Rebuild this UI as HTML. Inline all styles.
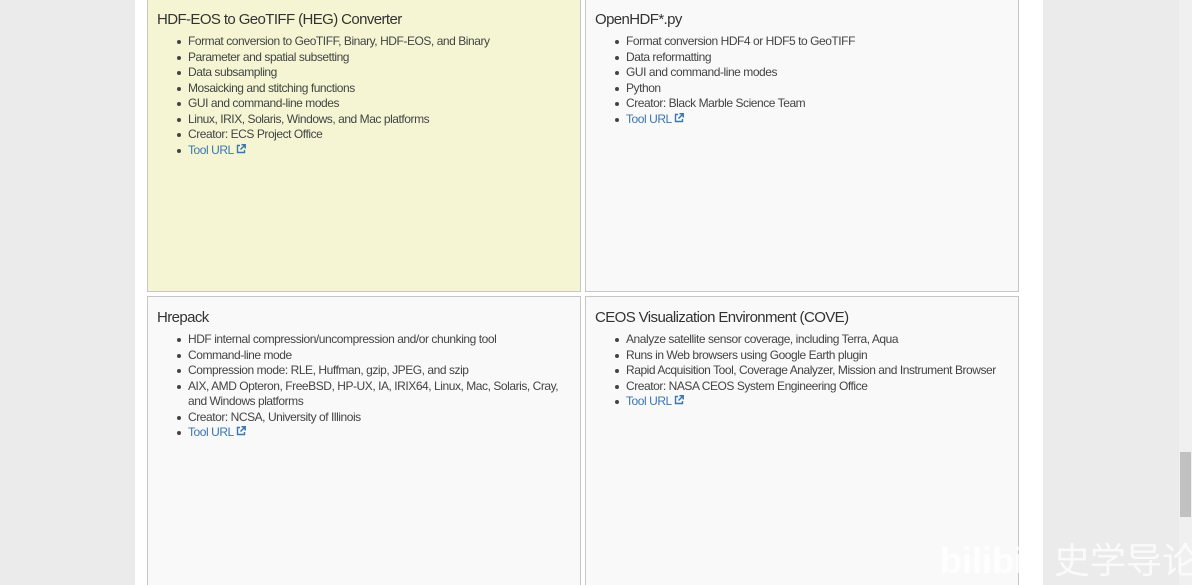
<!DOCTYPE html>
<html><head><meta charset="utf-8"><style>
*{box-sizing:border-box;margin:0;padding:0}
html,body{width:1192px;height:585px;overflow:hidden;background:#ebebeb;font-family:"Liberation Sans","Noto Sans CJK SC",sans-serif;color:#333;position:relative}
.wrap{position:absolute;left:135px;top:0;width:908px;height:585px;background:#fff}
.card{position:absolute;width:434px;border:1px solid #c6c6c6;background:#f9f9f9;padding:11px 9px 0}
.card.y{background:#f5f5d4}
h3{font-weight:normal;font-size:15px;letter-spacing:-0.6px;color:#333;line-height:20px;margin-bottom:4px}
ul{list-style:none;padding-left:31px}
li{font-size:12px;letter-spacing:-0.45px;line-height:15.5px;position:relative;color:#444}
li:before{content:"";position:absolute;left:-11px;top:6px;width:4px;height:4px;border-radius:2px;background:#444}
a{color:#3a76b0;text-decoration:none}
.sb{position:absolute;left:1179px;top:0;width:13px;height:585px;background:#f0f0f0}
.th{position:absolute;left:1180px;top:452px;width:11px;height:65px;background:#c1c1c1}
.wm{position:absolute;left:940px;top:538px;font-size:36px;color:rgba(255,255,255,.75);white-space:nowrap;line-height:45px}
</style></head><body>
<div class="wrap"></div>
<div class="card y" style="left:147px;top:-2px;height:294px">
<h3>HDF-EOS to GeoTIFF (HEG) Converter</h3>
<ul><li>Format conversion to GeoTIFF, Binary, HDF-EOS, and Binary</li><li>Parameter and spatial subsetting</li><li>Data subsampling</li><li>Mosaicking and stitching functions</li><li>GUI and command-line modes</li><li>Linux, IRIX, Solaris, Windows, and Mac platforms</li><li>Creator: ECS Project Office</li><li><a>Tool URL <svg width="10" height="10" viewBox="0 0 10 10"><path d="M4 1.5H1.5v7h7V6" fill="none" stroke="#3a76b0" stroke-width="1.4"/><path d="M5.5 .8h3.7v3.7M9 1L4.5 5.5" fill="none" stroke="#3a76b0" stroke-width="1.5"/></svg></a></li></ul>
</div>
<div class="card" style="left:585px;top:-2px;height:294px">
<h3>OpenHDF*.py</h3>
<ul><li>Format conversion HDF4 or HDF5 to GeoTIFF</li><li>Data reformatting</li><li>GUI and command-line modes</li><li>Python</li><li>Creator: Black Marble Science Team</li><li><a>Tool URL <svg width="10" height="10" viewBox="0 0 10 10"><path d="M4 1.5H1.5v7h7V6" fill="none" stroke="#3a76b0" stroke-width="1.4"/><path d="M5.5 .8h3.7v3.7M9 1L4.5 5.5" fill="none" stroke="#3a76b0" stroke-width="1.5"/></svg></a></li></ul>
</div>
<div class="card" style="left:147px;top:296px;height:289px;border-bottom:none">
<h3>Hrepack</h3>
<ul><li>HDF internal compression/uncompression and/or chunking tool</li><li>Command-line mode</li><li>Compression mode: RLE, Huffman, gzip, JPEG, and szip</li><li>AIX, AMD Opteron, FreeBSD, HP-UX, IA, IRIX64, Linux, Mac, Solaris, Cray, and Windows platforms</li><li>Creator: NCSA, University of Illinois</li><li><a>Tool URL <svg width="10" height="10" viewBox="0 0 10 10"><path d="M4 1.5H1.5v7h7V6" fill="none" stroke="#3a76b0" stroke-width="1.4"/><path d="M5.5 .8h3.7v3.7M9 1L4.5 5.5" fill="none" stroke="#3a76b0" stroke-width="1.5"/></svg></a></li></ul>
</div>
<div class="card" style="left:585px;top:296px;height:289px;border-bottom:none">
<h3>CEOS Visualization Environment (COVE)</h3>
<ul style="margin-right:-14px"><li>Analyze satellite sensor coverage, including Terra, Aqua</li><li>Runs in Web browsers using Google Earth plugin</li><li>Rapid Acquisition Tool, Coverage Analyzer, Mission and Instrument Browser</li><li>Creator: NASA CEOS System Engineering Office</li><li><a>Tool URL <svg width="10" height="10" viewBox="0 0 10 10"><path d="M4 1.5H1.5v7h7V6" fill="none" stroke="#3a76b0" stroke-width="1.4"/><path d="M5.5 .8h3.7v3.7M9 1L4.5 5.5" fill="none" stroke="#3a76b0" stroke-width="1.5"/></svg></a></li></ul>
</div>
<div class="sb"></div><div class="th"></div>
<div class="wm"><b>bilibili</b> 史学导论</div>
</body></html>
